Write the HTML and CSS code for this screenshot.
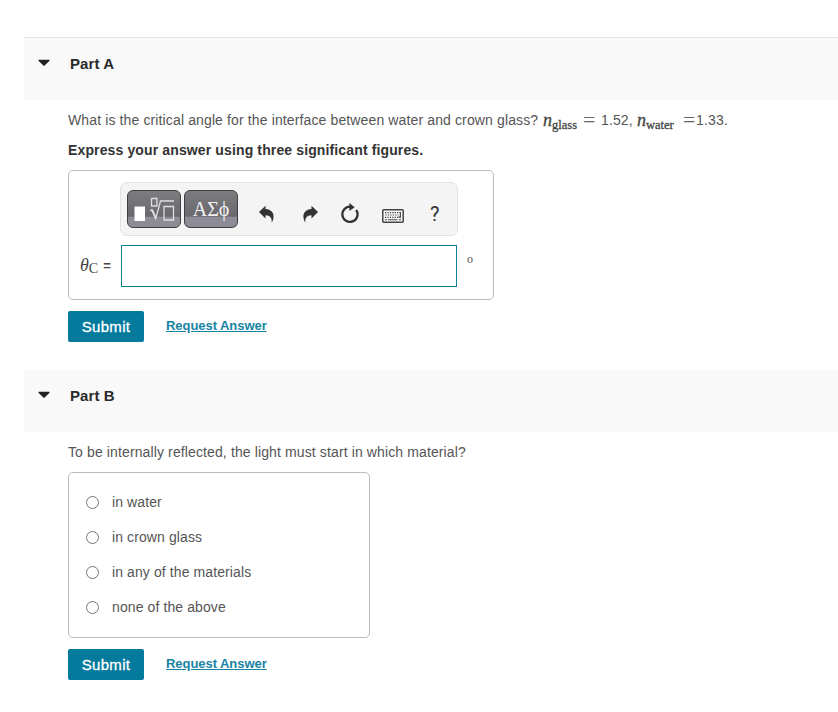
FILE: index.html
```html
<!DOCTYPE html>
<html lang="en">
<head>
<meta charset="utf-8">
<title>Critical angle</title>
<link rel="stylesheet" href="styles.css">
</head>
<body>
<section class="part part-a">
  <header class="part-header">
    <svg class="caret" width="12" height="8" viewBox="0 0 12 8"><path d="M.7.8h10.6Q12 1 11.3 2L6.6 6.6Q6 7.2 5.4 6.6L.7 2Q0 1 .7.8z" fill="#212121"/></svg>
    <h2>Part A</h2>
  </header>
  <div class="part-body">
    <p class="question"><span class="q-main">What is the critical angle for the interface between water and crown glass?</span><span class="var v-glass"><i>n</i><sub>glass</sub></span><span class="eq eq-one">=</span><span class="num">1.52,</span><span class="var v-water"><i>n</i><sub>water</sub></span><span class="eq eq-two">=</span><span class="num-end">1.33.</span></p>
    <p class="instruction">Express your answer using three significant figures.</p>
    <div class="answer-box">
      <div class="toolbar">
        <button class="tool" aria-label="Templates"><svg width="50" height="34" viewBox="0 0 50 34"><path d="M6.5 14.5h10.5v14.5H6.5z" fill="#fff"/><g fill="none" stroke="#dedee2" stroke-width="1.3"><path d="M23.5 6.5h5.4v7.5h-5.4z"/><path d="M36 14.5h9.5V28H36z"/><path d="M22 18.7l2-1 3.7 9L32.5 9H46"/><path d="M24.2 18.2l3.6 8" stroke-width="2"/></g></svg></button>
        <button class="tool symbols">ΑΣϕ</button>
        <svg class="undo" width="16" height="18" viewBox="0 0 16 18"><path d="M0 7L6.5.7v3.4C12 4.4 15.5 8 14.4 13.4Q14 16 12.6 17.5C13.3 13.2 11.2 10.3 6.5 10.2v3.4z" fill="#333"/></svg>
        <svg class="redo" width="16" height="18" viewBox="0 0 16 18"><path d="M16 7L9.5.7v3.4C4 4.4.5 8 1.6 13.4Q2 16 3.4 17.5C2.7 13.2 4.8 10.3 9.5 10.2v3.4z" fill="#333"/></svg>
        <svg class="reset" width="18" height="21" viewBox="0 0 18 21"><path d="M10 3.8A7.6 7.6 0 1 0 15.2 7" fill="none" stroke="#333" stroke-width="2.3"/><path d="M8.4 0L13.7 4.2 8.4 8z" fill="#333"/></svg>
        <svg class="keyboard" width="22" height="14" viewBox="0 0 22 14"><rect x=".8" y=".8" width="20.4" height="12.4" rx="1" fill="#fafafa" stroke="#444" stroke-width="1.5"/><path d="M3 3.6h16M3.5 6h13M3 8.4h16" stroke="#444" stroke-width="1.1" stroke-dasharray="1.3 1.1"/><path d="M3 10.8h2M6 10.8h9.5M17 10.8h2M18.4 3v5h-2" fill="none" stroke="#444" stroke-width="1.1"/></svg>
        <span class="help">?</span>
      </div>
      <div class="entry">
        <label class="theta" for="ans"><i>θ</i><sub>C</sub><span class="theta-eq">=</span></label>
        <input id="ans" class="answer" type="text">
        <span class="degree">o</span>
      </div>
    </div>
    <div class="actions"><button class="submit">Submit</button><a class="request" href="#">Request Answer</a></div>
  </div>
</section>
<section class="part part-b">
  <header class="part-header">
    <svg class="caret" width="12" height="8" viewBox="0 0 12 8"><path d="M.7.8h10.6Q12 1 11.3 2L6.6 6.6Q6 7.2 5.4 6.6L.7 2Q0 1 .7.8z" fill="#212121"/></svg>
    <h2>Part B</h2>
  </header>
  <div class="part-body">
    <p class="question"><span class="q-b">To be internally reflected, the light must start in which material?</span></p>
    <div class="choices">
      <label><input type="radio" name="m"><span>in water</span></label>
      <label><input type="radio" name="m"><span>in crown glass</span></label>
      <label><input type="radio" name="m"><span>in any of the materials</span></label>
      <label><input type="radio" name="m"><span>none of the above</span></label>
    </div>
    <div class="actions actions-b"><button class="submit">Submit</button><a class="request" href="#">Request Answer</a></div>
  </div>
</section>
</body>
</html>
```
FILE: styles.css
```css
* { box-sizing: border-box; }
body {
  margin: 0;
  padding: 37px 0 0 24px;
  background: #fff;
  color: #555;
  font: 14px/20px "Liberation Sans", Arial, sans-serif;
}
p, h2 { margin: 0; }
.part-header {
  display: flex;
  align-items: flex-start;
  height: 62px;
  padding: 16px 0 0 14px;
  background: #f9f9f9;
}
.part-a .part-header {
  height: 63px;
  border-top: 1px solid #e2e2e2;
}
.caret { margin: 5px 20px 0 0; }
h2 {
  color: #2a2a2a;
  font-size: 15px;
  line-height: 20px;
  font-weight: bold;
  letter-spacing: .1px;
}
.part-body { padding: 10px 0 0 44px; }
.question { display: flex; height: 20px; white-space: nowrap; }
.q-main { width: 475px; letter-spacing: .127px; }
.q-b { letter-spacing: .12px; }
.var, .eq, .theta { font-family: "Liberation Serif", "Times New Roman", serif; }
.var { color: #444; -webkit-text-stroke: .3px #444; }
.var i { font-size: 18px; }
.var sub { font-size: 12.5px; line-height: 0; vertical-align: -3px; }
.v-glass { width: 40px; }
.v-water { width: 46px; }
.eq { font-size: 22px; color: #666; }
.eq-one { width: 18px; }
.eq-two { width: 13px; }
.num { width: 36px; letter-spacing: .1px; }
.num-end { letter-spacing: .2px; }
.instruction {
  margin-top: 10px;
  color: #333;
  font-weight: bold;
  letter-spacing: .13px;
}
.answer-box {
  width: 426px;
  height: 130px;
  margin-top: 10px;
  padding: 11px 0 0 11px;
  border: 1px solid #bababa;
  border-radius: 5px;
}
.toolbar {
  display: flex;
  align-items: flex-start;
  width: 338px;
  height: 54px;
  margin-left: 40px;
  padding: 7px 0 0 6px;
  border: 1px solid #e2e2e2;
  border-radius: 7px;
  background: #f4f4f4;
}
.tool {
  width: 54px;
  height: 38px;
  margin-right: 3px;
  padding: 0;
  border: 1.5px solid #3f3f43;
  border-radius: 6px;
  background: linear-gradient(#7d7d80 0, #69696d 70%, #8c8b96 73%, #8c8b96 100%);
}
.tool svg { display: block; }
.symbols {
  color: #f2f2f2;
  font: 20px/34px "Liberation Serif", serif;
}
.undo { margin: 15px 0 0 18px; }
.redo { margin: 15px 0 0 27px; }
.reset { margin: 13px 0 0 23px; }
.keyboard { margin: 19px 0 0 23px; }
.help { margin: 14px 0 0 26px; color: #333; font: 20px/20px Roboto, sans-serif; }
.entry { display: flex; align-items: flex-start; margin-top: 9px; }
.theta { width: 41px; padding-top: 10px; color: #444; white-space: nowrap; }
.theta i { font-size: 18px; }
.theta sub { font-size: 14px; line-height: 0; vertical-align: -2px; }
.theta-eq { margin-left: 5px; font: bold 13px "Liberation Sans", sans-serif; vertical-align: 1px; }
.answer { width: 336px; height: 42px; border: 1px solid #128098; background: #fff; outline: 0; }
.degree { margin: 4px 0 0 10px; font: 12px/20px "Liberation Serif", serif; }
.actions { display: flex; margin-top: 11px; }
.submit {
  width: 76px;
  height: 31px;
  padding: 0;
  border: 0;
  border-radius: 2px;
  background: #047a9c;
  color: #fff;
  font: 15px/30px "Liberation Sans", sans-serif;
  letter-spacing: .3px;
  -webkit-text-stroke: .3px #fff;
}
.request {
  margin: 5px 0 0 22px;
  color: #1784a3;
  font-size: 13px;
  font-weight: bold;
  letter-spacing: -.05px;
  text-underline-offset: 1px;
}
.part-b { margin-top: 28px; }
.choices {
  display: flex;
  flex-direction: column;
  gap: 15px;
  width: 302px;
  height: 166px;
  margin-top: 10px;
  padding: 19px 0 0 17px;
  border: 1px solid #bababa;
  border-radius: 5px;
  letter-spacing: .1px;
}
.choices label { display: flex; align-items: center; height: 20px; }
.choices input {
  appearance: none;
  width: 13px;
  height: 13px;
  margin: 0 13px 0 0;
  border: 1px solid #767676;
  border-radius: 50%;
  background: #fff;
}
```
